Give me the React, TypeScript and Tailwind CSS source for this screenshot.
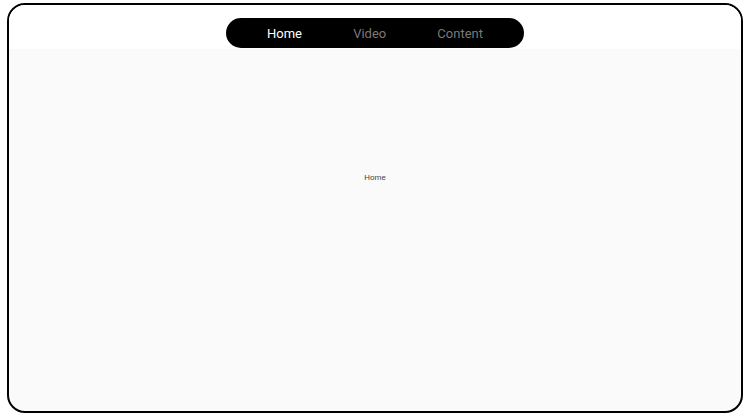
import { useState } from "react"

const tabs = ["Home", "Video", "Content"]

export default function App() {
  const [active, setActive] = useState("Home")

  return (
    <div className="w-[750px] h-[420px] bg-white pl-[7px] pt-[3px] font-['Roboto',sans-serif]">
      <div className="w-[736px] h-[410px] border-2 border-black rounded-[18px] overflow-hidden flex flex-col bg-[#fafafa]">
        <header className="h-[44px] bg-white flex justify-center items-end">
          <nav className="w-[298px] h-[30px] bg-black rounded-full flex items-center justify-between px-[41px] mb-[1px]">
            {tabs.map((t) => (
              <button
                key={t}
                onClick={() => setActive(t)}
                className={`text-[13px] leading-none ${active === t ? "text-white" : "text-[#7a7a7a]"}`}
              >
                {t}
              </button>
            ))}
          </nav>
        </header>
        <main className="flex-1 flex justify-center pt-[125px]">
          <p className="text-[8px] text-[#444] leading-none">{active}</p>
        </main>
      </div>
    </div>
  )
}
